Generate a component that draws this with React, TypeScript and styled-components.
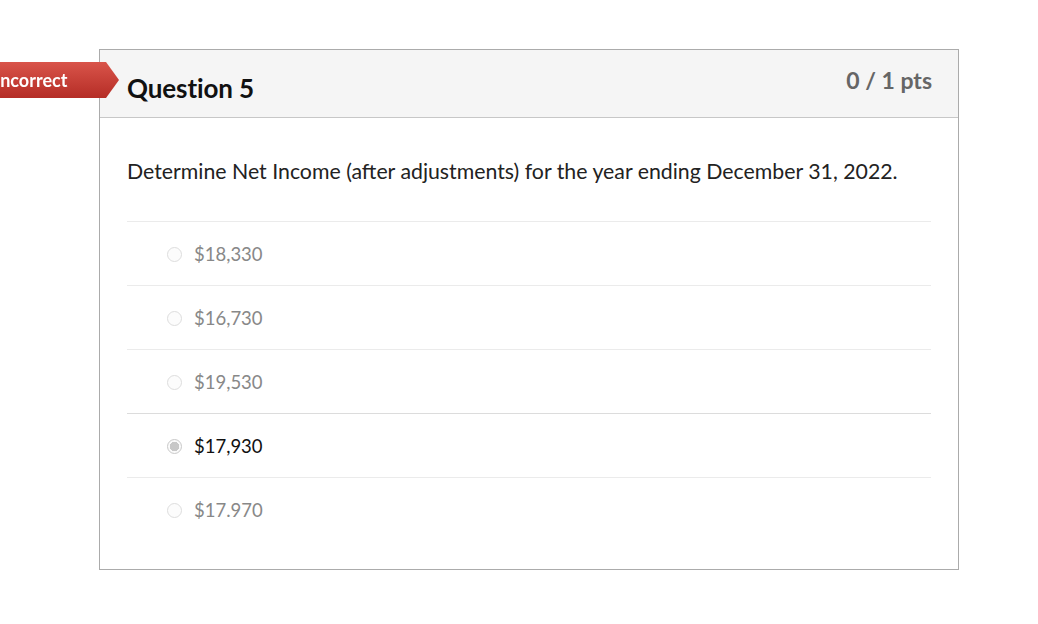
import React from "react"
import styled, { createGlobalStyle } from "styled-components"

const GlobalStyle = createGlobalStyle`
  html, body {
    margin: 0;
    padding: 0;
    background: #ffffff;
    font-family: Lato, "Open Sans", Arial, sans-serif;
  }
`

const Page = styled.div`
  width: 1038px;
  height: 624px;
  padding: 49px 0 0 99px;
  box-sizing: border-box;
  overflow: hidden;
`

const Card = styled.div`
  position: relative;
  width: 860px;
  height: 521px;
  box-sizing: border-box;
  border: 1px solid #ababab;
  background: #fff;
`

const Header = styled.div`
  height: 68px;
  box-sizing: border-box;
  background: #f5f5f5;
  border-bottom: 1px solid #c7c7c7;
  display: flex;
  justify-content: space-between;
  align-items: flex-start;
  padding: 0 26px 0 27px;
`

const Title = styled.h2`
  margin: 22px 0 0;
  font-size: 26px;
  font-weight: 700;
  color: #111;
  letter-spacing: -0.1px;
`

const Points = styled.div`
  margin-top: 16px;
  font-size: 23px;
  font-weight: 700;
  color: #666;
`

const Ribbon = styled.div`
  position: absolute;
  left: -110px;
  top: 12px;
  width: 129px;
  height: 36px;
  box-sizing: border-box;
  padding-left: 5px;
  display: flex;
  align-items: center;
  color: #fff;
  font-size: 18px;
  font-weight: 700;
  background: linear-gradient(#d9544a, #b52d26);
  clip-path: polygon(0 0, 116px 0, 129px 50%, 116px 100%, 0 100%);
  filter: drop-shadow(0 1px 1px rgba(0, 0, 0, 0.3));
`

const Body = styled.div`
  padding: 0 27px 0 27px;
`

const Prompt = styled.p`
  margin: 0;
  padding: 37px 0 34px;
  font-size: 21.3px;
  color: #222;
  line-height: 32px;
`

const Answer = styled.div<{ $selected?: boolean; $darkTop?: boolean }>`
  height: 64px;
  box-sizing: border-box;
  border-top: 1px solid ${(p) => (p.$darkTop ? "#dcdcdc" : "#ebebeb")};
  display: flex;
  align-items: center;
  padding-left: 40px;
  gap: 12px;
  font-size: 18.5px;
  color: ${(p) => (p.$selected ? "#111" : "#888")};
`

const Radio = styled.span<{ $checked?: boolean }>`
  width: 15px;
  height: 15px;
  box-sizing: border-box;
  border-radius: 50%;
  border: 1px solid ${(p) => (p.$checked ? "#c9c9c9" : "#dddddd")};
  background: ${(p) =>
    p.$checked ? "radial-gradient(circle, #c8c8c8 0 4.5px, #fafafa 5px)" : "#fcfcfc"};
  margin-top: 1px;
`

const answers = ["$18,330", "$16,730", "$19,530", "$17,930", "$17.970"]
const chosen = 3

export default function App() {
  return (
    <>
      <GlobalStyle />
      <Page>
        <Card>
          <Ribbon>Incorrect</Ribbon>
          <Header>
            <Title>Question 5</Title>
            <Points>0 / 1 pts</Points>
          </Header>
          <Body>
            <Prompt>
              Determine Net Income (after adjustments) for the year ending December 31, 2022.
            </Prompt>
            {answers.map((a, i) => (
              <Answer key={a} $selected={i === chosen} $darkTop={i === chosen}>
                <Radio $checked={i === chosen} />
                {a}
              </Answer>
            ))}
          </Body>
        </Card>
      </Page>
    </>
  )
}
